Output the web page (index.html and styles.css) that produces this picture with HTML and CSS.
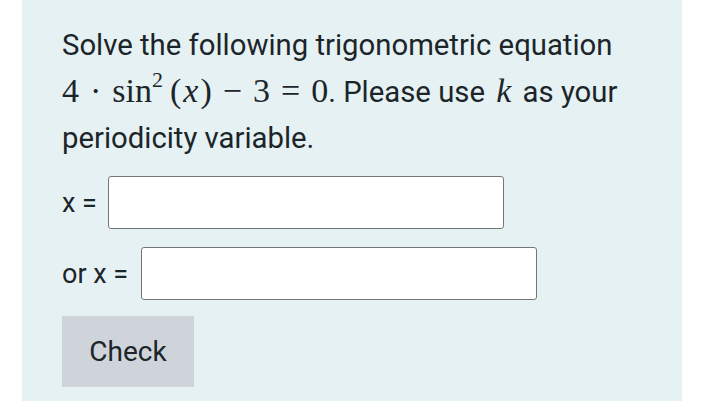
FILE: index.html
```html
<!doctype html>
<html lang="en">
<head>
	<meta charset="utf-8">
	<title>Trigonometric equation</title>
	<link rel="stylesheet" href="styles.css">
</head>
<body>
<div class="task">
	<p class="question">
		Solve the following trigonometric equation<br>
		<span class="math">4<span class="op">&middot;</span>sin<sup>2</sup>(<i>x</i>)<span class="op">&minus;</span>3<span class="op">=</span>0</span>. Please use <span class="math var"><i>k</i></span> as your<br>
		periodicity variable.
	</p>
	<div class="answer-row">
		<label for="x1">x =</label>
		<input type="text" id="x1" class="answer">
	</div>
	<div class="answer-row">
		<label for="x2">or x =</label>
		<input type="text" id="x2" class="answer">
	</div>
	<button class="check">Check</button>
</div>
</body>
</html>
```

FILE: styles.css
```css
html,body{
	background: #fff;
	margin: 0;
	padding: 0;
	font-family: Roboto, "Noto Sans", sans-serif;
	color: #1c2529;
}
*{
	box-sizing: border-box;
}
	.task{
		margin: 0 30px 0 22px;
		width: 660px;
		height: 401px;
		background: #e6f1f3;
		padding: 22px 40px 14px;
	}
	.question{
		margin: 0;
		font-size: 29.3px;
		line-height: 46px;
		white-space: nowrap;
	}
	.math{
		font-family: "Liberation Serif", "DejaVu Serif", serif;
		font-size: 34px;
	}
	.math .op{
		margin: 0 11px;
	}
	.math sup{
		font-size: 22px;
		line-height: 0;
		vertical-align: 15px;
		margin-right: 7px;
	}
	.math i{
		font-style: italic;
		margin: 0 2px;
	}
	.math.var i{
		margin: 0 4px;
	}
	.answer-row{
		display: flex;
		align-items: center;
		gap: 11px;
		font-size: 27px;
		height: 53px;
		margin-top: 15px;
	}
	.answer-row + .answer-row{
		margin-top: 18px;
		gap: 13px;
	}
	.answer{
		width: 396px;
		height: 53px;
		border: 1px solid #767676;
		border-radius: 3px;
		background: #fff;
		outline: none;
	}
	.check{
		display: block;
		margin-top: 16px;
		width: 132px;
		height: 71px;
		border: none;
		background: #cfd4db;
		font-family: Roboto, sans-serif;
		font-size: 28px;
		color: #1c2529;
	}
```
